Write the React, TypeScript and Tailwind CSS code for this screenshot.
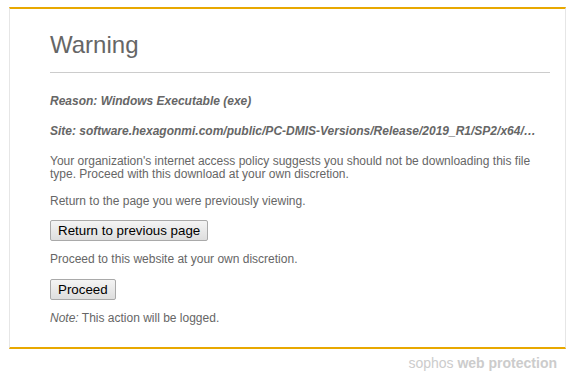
export default function App() {
  return (
    <div className="min-h-screen bg-white font-['Liberation_Sans',Arial,sans-serif] text-[#666]">
      <div className="ml-[9px] pt-[7px] w-[557px]">
        {/* Warning panel */}
        <div className="border-t-2 border-b-2 border-t-[#e8a800] border-b-[#e8a800] border-x border-x-[#e6e6e6] pl-[40px] pt-[22px] pb-[22px]">
          <div className="w-[500px]">
            <h1 className="text-[24px] leading-[28px] text-[#666]">Warning</h1>
            <div className="mt-[13px] h-px bg-[#cccccc]" />

            <p className="mt-[21px] text-[12px] leading-[14px] font-bold italic">
              Reason: Windows Executable (exe)
            </p>
            <p className="mt-[16px] text-[12px] leading-[14px] font-bold italic whitespace-nowrap">
              Site: software.hexagonmi.com/public/PC-DMIS-Versions/Release/2019_R1/SP2/x64/…
            </p>

            <p className="mt-[17px] text-[12px] leading-[13px]">
              Your organization's internet access policy suggests you should not be downloading this file
              type. Proceed with this download at your own discretion.
            </p>

            <p className="mt-[13px] text-[12px] leading-[14px]">
              Return to the page you were previously viewing.
            </p>
            <button className="mt-[12px] block h-[21px] px-[7px] border border-[#a9a9a9] rounded-[2px] bg-gradient-to-b from-[#f4f4f4] to-[#dedede] text-[13.33px] leading-[15px] text-black">
              Return to previous page
            </button>

            <p className="mt-[11px] text-[12px] leading-[14px]">
              Proceed to this website at your own discretion.
            </p>
            <button className="mt-[13px] block h-[21px] px-[7px] border border-[#a9a9a9] rounded-[2px] bg-gradient-to-b from-[#f4f4f4] to-[#dedede] text-[13.33px] leading-[15px] text-black">
              Proceed
            </button>

            <p className="mt-[11px] text-[12px] leading-[14px]">
              <i>Note:</i> This action will be logged.
            </p>
          </div>
        </div>

        {/* Footer brand */}
        <div className="mt-[6px] pr-[9px] text-right text-[14px] leading-[16px] text-[#cccccc]">
          sophos <b>web protection</b>
        </div>
      </div>
    </div>
  );
}
